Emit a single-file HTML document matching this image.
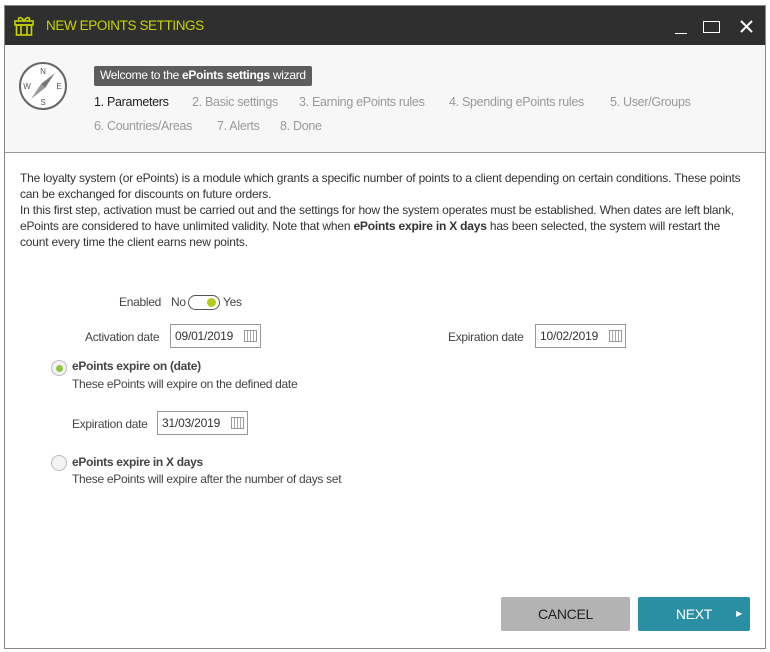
<!DOCTYPE html>
<html><head><style>
*{margin:0;padding:0;box-sizing:border-box}
body{width:770px;height:652px;background:#fff;font-family:"Liberation Sans",sans-serif;color:#333;position:relative;overflow:hidden;font-size:12px}
.win{position:absolute;left:4px;top:5px;width:762px;height:644px;border:1px solid #888;background:#fff}
.title{position:absolute;left:0;top:0;width:760px;height:39px;background:#2f2f2f}
.title .t{position:absolute;left:41px;top:12px;color:#c8d400;font-size:13.5px;letter-spacing:-0.4px}
.hdr{position:absolute;left:0;top:39px;width:760px;height:108px;background:#f7f7f7;border-bottom:1px solid #999}
.abs{position:absolute;white-space:nowrap}
.wel{left:89px;top:21px;background:#5d5d5d;color:#fff;padding:2px 6px;height:20px;border-radius:2px;font-size:12px;letter-spacing:-0.3px}
.step{color:#999;font-size:12.5px;letter-spacing:-0.3px}
.p{left:15px;width:730px;font-size:12px;line-height:16px;letter-spacing:-0.2px;color:#333}
.lbl{font-size:12px;color:#444;letter-spacing:-0.3px}
.inp{border:1px solid #999;height:24px;width:91px;font-size:12px;padding:4px 0 0 4px;letter-spacing:-0.2px;background:#fff}
.cal{position:absolute;right:3px;top:5px;width:13px;height:12px;border:1px solid #999;background:repeating-linear-gradient(90deg,#fff 0 2px,#aaa 2px 3px),#fff}
.btn{height:34px;top:591px;color:#fff;font-size:14px;text-align:center;line-height:34px;border-radius:2px;letter-spacing:-0.3px}
.radio{width:16px;height:16px;border-radius:50%;border:1px solid #bbb;background:#f3f3f3}
</style></head><body>
<div class="win">
<div class="title">
<svg class="abs" style="left:7px;top:7px" width="24" height="24" viewBox="0 0 24 24" fill="none" stroke="#c8d400" stroke-width="1.6"><rect x="3" y="8" width="18" height="4"/><rect x="4.5" y="12" width="15" height="10"/><path d="M9 12v10M15 12v10M12 8C9 3 5 4 7 8M12 8c3-5 7-4 5 0"/></svg>
<div class="t">NEW EPOINTS SETTINGS</div>
<div class="abs" style="left:670px;top:27px;width:12px;height:1px;background:#fff"></div>
<div class="abs" style="left:698px;top:15px;width:17px;height:12px;border:1.5px solid #fff"></div>
<svg class="abs" style="left:735px;top:14px" width="13" height="13" stroke="#fff" stroke-width="2"><path d="M1 1l11 11M12 1L1 12"/></svg>
</div>
<div class="hdr">
<svg class="abs" style="left:13px;top:16px" width="50" height="50" viewBox="0 0 50 50"><circle cx="25" cy="25" r="23" fill="#fff" stroke="#666" stroke-width="2"/><path d="M37 12L27 27 23 23z" fill="#777"/><path d="M13 38L23 23 27 27z" fill="#999"/><text x="25" y="13" font-size="8" text-anchor="middle" fill="#555" font-family="Liberation Sans">N</text><text x="25" y="44" font-size="8" text-anchor="middle" fill="#555" font-family="Liberation Sans">S</text><text x="9" y="28" font-size="8" text-anchor="middle" fill="#555" font-family="Liberation Sans">W</text><text x="41" y="28" font-size="8" text-anchor="middle" fill="#555" font-family="Liberation Sans">E</text></svg>
<div class="abs wel">Welcome to the <b>ePoints settings</b> wizard</div>
<div class="abs step" style="left:89px;top:50px;color:#222">1. Parameters</div>
<div class="abs step" style="left:187px;top:50px">2. Basic settings</div>
<div class="abs step" style="left:294px;top:50px">3. Earning ePoints rules</div>
<div class="abs step" style="left:444px;top:50px">4. Spending ePoints rules</div>
<div class="abs step" style="left:605px;top:50px">5. User/Groups</div>
<div class="abs step" style="left:89px;top:74px">6. Countries/Areas</div>
<div class="abs step" style="left:212px;top:74px">7. Alerts</div>
<div class="abs step" style="left:275px;top:74px">8. Done</div>
</div>
<div class="abs p" style="top:164px;white-space:normal">The loyalty system (or ePoints) is a module which grants a specific number of points to a client depending on certain conditions. These points can be exchanged for discounts on future orders.<br>In this first step, activation must be carried out and the settings for how the system operates must be established. When dates are left blank, ePoints are considered to have unlimited validity. Note that when <b>ePoints expire in X days</b> has been selected, the system will restart the count every time the client earns new points.</div>
<div class="abs lbl" style="left:114px;top:289px">Enabled</div>
<div class="abs lbl" style="left:166px;top:289px">No</div>
<div class="abs" style="left:183px;top:289px;width:32px;height:15px;border:1px solid #555;border-radius:8px;background:#fff"><div style="position:absolute;right:3px;top:2px;width:9px;height:9px;border-radius:50%;background:#b5cc18"></div></div>
<div class="abs lbl" style="left:218px;top:289px">Yes</div>
<div class="abs lbl" style="left:80px;top:324px">Activation date</div>
<div class="abs inp" style="left:165px;top:318px">09/01/2019<div class="cal"></div></div>
<div class="abs lbl" style="left:443px;top:324px">Expiration date</div>
<div class="abs inp" style="left:530px;top:318px">10/02/2019<div class="cal"></div></div>
<div class="abs radio" style="left:46px;top:354px"><div style="margin:3.5px;width:7px;height:7px;border-radius:50%;background:#8cc63e"></div></div>
<div class="abs lbl" style="left:67px;top:353px;font-weight:bold">ePoints expire on (date)</div>
<div class="abs lbl" style="left:67px;top:371px">These ePoints will expire on the defined date</div>
<div class="abs lbl" style="left:67px;top:411px">Expiration date</div>
<div class="abs inp" style="left:152px;top:405px">31/03/2019<div class="cal"></div></div>
<div class="abs radio" style="left:46px;top:449px"></div>
<div class="abs lbl" style="left:67px;top:449px;font-weight:bold">ePoints expire in X days</div>
<div class="abs lbl" style="left:67px;top:466px">These ePoints will expire after the number of days set</div>
<div class="abs btn" style="left:496px;width:129px;background:#b3b3b3;color:#222">CANCEL</div>
<div class="abs btn" style="left:633px;width:112px;background:#2b8fa3">NEXT<span style="position:absolute;right:8px;font-size:8px">&#9654;</span></div>
</div>
</body></html>
